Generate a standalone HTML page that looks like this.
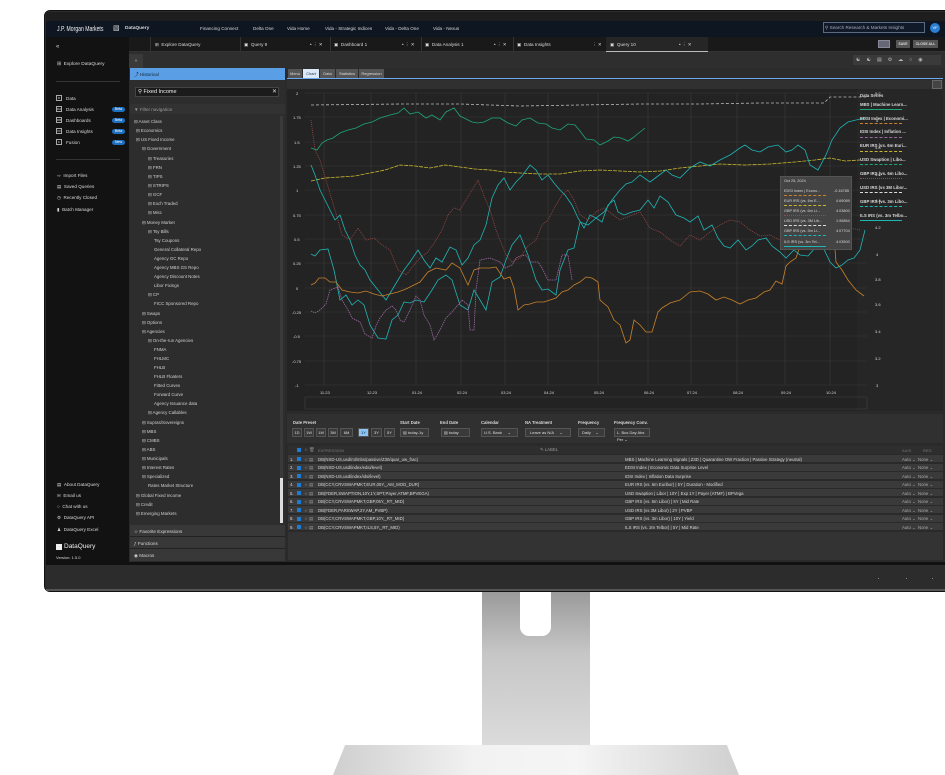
<!DOCTYPE html>
<html><head><meta charset="utf-8">
<style>
*{margin:0;padding:0;box-sizing:border-box}
body{width:945px;height:768px;background:#fff;position:relative;overflow:hidden;font-family:"Liberation Sans",sans-serif;color:#ddd}
.a{position:absolute}
.t{position:absolute;white-space:nowrap;font-size:4.6px;color:#d8d8d8}
.b{font-weight:bold}
.badge{position:absolute;left:112px;width:13px;height:5px;border-radius:3px;background:#1f6fbf;color:#fff;font-size:3.5px;text-align:center;line-height:5px}
.ic{position:absolute;width:6px;height:6px;border:1px solid #aaa;font-size:3px;color:#ddd;text-align:center;line-height:5px}
.tree .t{color:#cfcfcf;font-size:4.4px}
.row{position:absolute;left:288px;width:655px;height:8px;background:#3a3a3a;border-bottom:1px solid #2a2a2a}
.row .t{top:1.5px;font-size:4.3px}
.chk{position:absolute;width:4px;height:4px;background:#1f7ad4;top:2px}
.pill{position:absolute;height:9px;background:#3a3a3a;border:1px solid #555;font-size:4px;color:#ddd;text-align:center;line-height:7px}
</style></head><body>

<!-- stand -->
<div class="a" style="left:482px;top:590px;width:108px;height:158px;background:linear-gradient(#999,#c6c6c6 40%,#dcdcdc)"></div>
<div class="a" style="left:520px;top:590px;width:31px;height:46px;background:#fff;border-radius:0 0 9px 9px"></div>
<div class="a" style="left:333px;top:745px;width:406px;height:30px;background:linear-gradient(90deg,#cfcfcf,#f2f2f2 35%,#f5f5f5 60%,#d0d0d0);clip-path:polygon(3% 0,97% 0,100% 100%,0 100%)"></div>

<!-- bezel -->
<div class="a" style="left:44px;top:10px;width:910px;height:582px;background:#2c2c2c;border-radius:6px;border:1px solid #111"></div>
<div class="a" style="left:46px;top:12px;width:899px;height:553px;background:#1e1e1e"></div>
<div class="a" style="left:46px;top:562px;width:899px;height:3px;background:#111"></div>
<div class="a" style="left:46px;top:589px;width:899px;height:2px;background:#555"></div>
<div class="a" style="left:878px;top:578px;width:1px;height:1px;background:#888"></div>
<div class="a" style="left:906px;top:578px;width:1px;height:1px;background:#888"></div>
<div class="a" style="left:932px;top:578px;width:1px;height:1px;background:#888"></div>

<!-- top nav -->
<div class="a" style="left:46px;top:21px;width:899px;height:16px;background:#0e1622"></div>
<div class="t" style="left:57px;top:24px;font-size:7.5px;color:#eee;transform:scaleX(0.68);transform-origin:left">J.P. Morgan Markets</div>
<div class="t" style="left:113px;top:24px;font-size:7px;color:#ddd">&#9639;</div>
<div class="t b" style="left:125px;top:26px;font-size:4.8px">DataQuery</div>
<div class="t" style="left:200px;top:26px">Financing Connect</div>
<div class="t" style="left:253px;top:26px">Delta One</div>
<div class="t" style="left:287px;top:26px">Vida Home</div>
<div class="t" style="left:325px;top:26px">Vida - Strategic Indices</div>
<div class="t" style="left:385px;top:26px">Vida - Delta One</div>
<div class="t" style="left:433px;top:26px">Vida - Nexus</div>
<div class="a" style="left:823px;top:22px;width:102px;height:11px;border:1px solid #5a6a80;background:#101a28"></div>
<div class="t" style="left:825px;top:25px;color:#aab">&#9906; Search Research &amp; Markets Insights</div>
<div class="a" style="left:930px;top:23px;width:10px;height:10px;border-radius:50%;background:#2a7fd4;font-size:4px;text-align:center;line-height:10px;color:#fff">VF</div>

<!-- left sidebar -->
<div class="a" style="left:46px;top:37px;width:83px;height:525px;background:#121212"></div>
<div class="t" style="left:56px;top:44px;font-size:6px">&laquo;</div>
<div class="t" style="left:57px;top:62px;font-size:4.8px">&#8862; &nbsp;Explore DataQuery</div>
<div class="a" style="left:56px;top:81px;width:64px;height:1px;background:#333"></div>
<div class="ic" style="left:56px;top:95px">D</div><div class="t" style="left:66px;top:96px">Data</div>
<div class="ic" style="left:56px;top:106px">DA</div><div class="t" style="left:66px;top:107px">Data Analysis</div><div class="badge" style="top:107px">Beta</div>
<div class="ic" style="left:56px;top:117px">DB</div><div class="t" style="left:66px;top:118px">Dashboards</div><div class="badge" style="top:118px">Beta</div>
<div class="ic" style="left:56px;top:128px">DI</div><div class="t" style="left:66px;top:129px">Data Insights</div><div class="badge" style="top:129px">Beta</div>
<div class="ic" style="left:56px;top:139px">F</div><div class="t" style="left:66px;top:140px">Fusion</div><div class="badge" style="top:140px">New</div>
<div class="a" style="left:56px;top:159px;width:64px;height:1px;background:#333"></div>
<div class="t" style="left:57px;top:173px">&#8680; &nbsp;Import Files</div>
<div class="t" style="left:57px;top:184px">&#9636; &nbsp;Saved Queries</div>
<div class="t" style="left:57px;top:195px">&#9719; &nbsp;Recently Closed</div>
<div class="t" style="left:57px;top:207px">&#9646; &nbsp;Batch Manager</div>
<div class="t" style="left:57px;top:482px">&#9636; &nbsp;About DataQuery</div>
<div class="t" style="left:57px;top:493px">&#9993; &nbsp;Email us</div>
<div class="t" style="left:57px;top:504px">&#9675; &nbsp;Chat with us</div>
<div class="t" style="left:57px;top:515px">&#9881; &nbsp;DataQuery API</div>
<div class="t" style="left:57px;top:527px">&#9823; &nbsp;DataQuery Excel</div>
<div class="a" style="left:56px;top:544px;width:6px;height:6px;background:#eee"></div>
<div class="t" style="left:64px;top:543px;font-size:6.5px;color:#eee">DataQuery</div>
<div class="t" style="left:56px;top:555px;font-size:4px">Version: 1.5.0</div>

<!-- tab row -->
<div class="a" style="left:129px;top:37px;width:816px;height:15px;background:#191919;border-bottom:1px solid #333"></div>
<div class="a" style="left:150px;top:37px;width:1px;height:15px;background:#333"></div>
<div class="t" style="left:155px;top:42px">&#8862; &nbsp;Explore DataQuery</div>
<div class="a" style="left:240px;top:37px;width:1px;height:15px;background:#333"></div>
<div class="t" style="left:244px;top:42px">&#9635; &nbsp;Query 9</div><div class="t" style="left:310px;top:42px">&bull; &#8942; &#10005;</div>
<div class="a" style="left:330px;top:37px;width:1px;height:15px;background:#333"></div>
<div class="t" style="left:334px;top:42px">&#9635; &nbsp;Dashboard 1</div><div class="t" style="left:402px;top:42px">&bull; &#8942; &#10005;</div>
<div class="a" style="left:421px;top:37px;width:1px;height:15px;background:#333"></div>
<div class="t" style="left:425px;top:42px">&#9635; &nbsp;Data Analysis 1</div><div class="t" style="left:494px;top:42px">&bull; &#8942; &#10005;</div>
<div class="a" style="left:513px;top:37px;width:1px;height:15px;background:#333"></div>
<div class="t" style="left:517px;top:42px">&#9635; &nbsp;Data Insights</div><div class="t" style="left:592px;top:42px">&#8942; &#10005;</div>
<div class="a" style="left:606px;top:37px;width:1px;height:15px;background:#333"></div>
<div class="a" style="left:606px;top:37px;width:102px;height:15px;background:#262626;border-bottom:1px solid #bbb"></div>
<div class="t" style="left:610px;top:42px">&#9635; &nbsp;Query 10</div><div class="t" style="left:679px;top:42px">&bull; &#8942; &#10005;</div>
<div class="a" style="left:878px;top:40px;width:12px;height:8px;background:#667;border:1px solid #889"></div>
<div class="a" style="left:896px;top:40px;width:14px;height:8px;background:#555;font-size:3.5px;text-align:center;line-height:8px;font-weight:bold">SAVE</div>
<div class="a" style="left:913px;top:40px;width:25px;height:8px;background:#555;font-size:3.5px;text-align:center;line-height:8px;font-weight:bold">CLOSE ALL</div>

<!-- workspace -->
<div class="a" style="left:129px;top:52px;width:816px;height:510px;background:#2a2a2a"></div>
<div class="a" style="left:129px;top:52px;width:816px;height:16px;background:#2e2e2e"></div>
<div class="a" style="left:129px;top:54px;width:14px;height:14px;background:#3a3a3a;font-size:5px;text-align:center;line-height:14px;color:#aaa">&laquo;</div>
<div class="a" style="left:853px;top:55px;width:88px;height:10px;background:#3a3a3a"></div>
<div class="t" style="left:856px;top:57px;font-size:5px;color:#bbb;letter-spacing:6px">&#9775;&#9775;&#9636;&#9881;&#9729;&#9675;&#9673;</div>

<!-- left panel -->
<div class="a" style="left:130px;top:68px;width:155px;height:12px;background:#5a9fe6"></div>
<div class="t" style="left:134px;top:72px;color:#123">&#10548; Historical</div>
<div class="a" style="left:130px;top:80px;width:155px;height:481px;background:#2d2d2d"></div>
<div class="a" style="left:135px;top:87px;width:144px;height:10px;background:#1b1b1b;border:1px solid #444"></div>
<div class="t" style="left:138px;top:89px;font-size:5.5px;color:#eee">&#9906; Fixed Income</div>
<div class="t" style="left:272px;top:88px;font-size:6px">&#10005;</div>
<div class="a" style="left:130px;top:104px;width:155px;height:10px;background:#323232"></div>
<div class="t" style="left:134px;top:107px;color:#999">&#9660; Filter navigation</div>
<div class="a" style="left:280px;top:116px;width:3px;height:407px;background:#3a3a3a"></div>
<div class="a" style="left:280px;top:478px;width:3px;height:45px;background:#ddd"></div>
<div class="tree">
<div class="t" style="left:134px;top:119px">&#8863; Asset Class</div>
<div class="t" style="left:136px;top:128px">&#8863; Economics</div>
<div class="t" style="left:136px;top:137px">&#8863; US Fixed Income</div>
<div class="t" style="left:142px;top:146px">&#8863; Government</div>
<div class="t" style="left:148px;top:156px">&#8863; Treasuries</div>
<div class="t" style="left:148px;top:165px">&#8863; FRN</div>
<div class="t" style="left:148px;top:174px">&#8863; TIPS</div>
<div class="t" style="left:148px;top:183px">&#8863; STRIPS</div>
<div class="t" style="left:148px;top:192px">&#8863; GCF</div>
<div class="t" style="left:148px;top:201px">&#8863; Exch Traded</div>
<div class="t" style="left:148px;top:210px">&#8863; Misc</div>
<div class="t" style="left:142px;top:220px">&#8863; Money Market</div>
<div class="t" style="left:148px;top:229px">&#8863; Tsy Bills</div>
<div class="t" style="left:154px;top:238px">Tsy Coupons</div>
<div class="t" style="left:154px;top:247px">General Collateral Repo</div>
<div class="t" style="left:154px;top:256px">Agency GC Repo</div>
<div class="t" style="left:154px;top:265px">Agency MBS GS Repo</div>
<div class="t" style="left:154px;top:274px">Agency Discount Notes</div>
<div class="t" style="left:154px;top:283px">Libor Fixings</div>
<div class="t" style="left:148px;top:292px">&#8863; CP</div>
<div class="t" style="left:154px;top:301px">FICC Sponsored Repo</div>
<div class="t" style="left:142px;top:311px">&#8863; Swaps</div>
<div class="t" style="left:142px;top:320px">&#8863; Options</div>
<div class="t" style="left:142px;top:329px">&#8863; Agencies</div>
<div class="t" style="left:148px;top:338px">&#8863; On-the-run Agencies</div>
<div class="t" style="left:154px;top:347px">FNMA</div>
<div class="t" style="left:154px;top:356px">FHLMC</div>
<div class="t" style="left:154px;top:365px">FHLB</div>
<div class="t" style="left:154px;top:374px">FHLB Floaters</div>
<div class="t" style="left:154px;top:383px">Fitted Curves</div>
<div class="t" style="left:154px;top:392px">Forward Curve</div>
<div class="t" style="left:154px;top:401px">Agency Issuance data</div>
<div class="t" style="left:148px;top:410px">&#8863; Agency Callables</div>
<div class="t" style="left:142px;top:420px">&#8863; Supras/Sovereigns</div>
<div class="t" style="left:142px;top:429px">&#8863; MBS</div>
<div class="t" style="left:142px;top:438px">&#8863; CMBS</div>
<div class="t" style="left:142px;top:447px">&#8863; ABS</div>
<div class="t" style="left:142px;top:456px">&#8863; Municipals</div>
<div class="t" style="left:142px;top:465px">&#8863; Interest Rates</div>
<div class="t" style="left:142px;top:474px">&#8863; Specialized</div>
<div class="t" style="left:148px;top:483px">Rates Market Structure</div>
<div class="t" style="left:136px;top:493px">&#8863; Global Fixed Income</div>
<div class="t" style="left:136px;top:502px">&#8863; Credit</div>
<div class="t" style="left:136px;top:511px">&#8863; Emerging Markets</div>
</div>
<div class="a" style="left:130px;top:525px;width:155px;height:12px;background:#383838;border-bottom:1px solid #222"></div>
<div class="t" style="left:134px;top:529px">&#9734; Favorite Expressions</div>
<div class="a" style="left:130px;top:537px;width:155px;height:12px;background:#383838;border-bottom:1px solid #222"></div>
<div class="t" style="left:134px;top:541px">&#402; Functions</div>
<div class="a" style="left:130px;top:549px;width:155px;height:12px;background:#383838"></div>
<div class="t" style="left:134px;top:553px">&#9673; Macros</div>

<!-- chart panel -->
<div class="a" style="left:287px;top:68px;width:656px;height:11px;background:#2c2c2c;border-bottom:1px solid #6aaaf0"></div>
<div class="a" style="left:288px;top:69px;width:14px;height:9px;background:#555;font-size:4px;text-align:center;line-height:9px">Menu</div>
<div class="a" style="left:303px;top:69px;width:16px;height:9px;background:#dbe9f7;color:#235;font-size:4px;text-align:center;line-height:9px">Chart</div>
<div class="a" style="left:320px;top:69px;width:15px;height:9px;background:#555;font-size:4px;text-align:center;line-height:9px">Data</div>
<div class="a" style="left:336px;top:69px;width:22px;height:9px;background:#555;font-size:4px;text-align:center;line-height:9px">Statistics</div>
<div class="a" style="left:359px;top:69px;width:25px;height:9px;background:#555;font-size:4px;text-align:center;line-height:9px">Regression</div>
<div class="a" style="left:287px;top:80px;width:656px;height:9px;background:#303030"></div>
<div class="a" style="left:932px;top:80px;width:10px;height:9px;background:#444;border:1px solid #666"></div>
<div class="a" style="left:287px;top:89px;width:656px;height:322px;background:#232323"></div>
<div class="a" style="left:857px;top:89px;width:86px;height:322px;background:#262626"></div>

<svg class="a" style="left:0;top:0" width="945" height="768" viewBox="0 0 945 768">
<g stroke="#3a3a3a" stroke-width="0.6">
<line x1="305" y1="93" x2="867" y2="93"/><line x1="305" y1="117" x2="867" y2="117"/><line x1="305" y1="142" x2="867" y2="142"/><line x1="305" y1="166" x2="867" y2="166"/><line x1="305" y1="190" x2="867" y2="190"/><line x1="305" y1="215" x2="867" y2="215"/><line x1="305" y1="239" x2="867" y2="239"/><line x1="305" y1="263" x2="867" y2="263"/><line x1="305" y1="288" x2="867" y2="288"/><line x1="305" y1="312" x2="867" y2="312"/><line x1="305" y1="336" x2="867" y2="336"/><line x1="305" y1="361" x2="867" y2="361"/><line x1="305" y1="385" x2="867" y2="385"/>
<line x1="324" y1="93" x2="324" y2="385"/><line x1="371" y1="93" x2="371" y2="385"/><line x1="416" y1="93" x2="416" y2="385"/><line x1="461" y1="93" x2="461" y2="385"/><line x1="505" y1="93" x2="505" y2="385"/><line x1="548" y1="93" x2="548" y2="385"/><line x1="598" y1="93" x2="598" y2="385"/><line x1="648" y1="93" x2="648" y2="385"/><line x1="691" y1="93" x2="691" y2="385"/><line x1="737" y1="93" x2="737" y2="385"/><line x1="785" y1="93" x2="785" y2="385"/><line x1="830" y1="93" x2="830" y2="385"/>
</g>
<g fill="none" stroke-width="0.8">
<polyline stroke="#bbb" stroke-dasharray="3,2" points="311,105 400,104 460,104 520,106 580,105 640,104 700,104 760,103 824,103 830,97 866,97"/>
<polyline stroke="#1ea67a" points="311,148 317,150 322,143 327,140 333,138 340,133 348,130 356,128 364,124 372,122 380,118 390,115 398,113 404,108 410,114 418,112 426,118 432,115 440,120 446,112 454,108 460,116 466,119 472,122 478,123 484,122 492,118 500,118 508,123 516,126 522,120 530,118 538,123 546,124 552,128 560,130 568,124 575,125 580,131 586,139 594,140 600,145 608,141 614,137 621,138 628,141 634,137 640,132 645,128"/>
<polyline stroke="#c8b72c" stroke-dasharray="4,1" points="311,181 325,178 340,177 355,176 370,173 385,170 400,165 415,166 430,168 445,165 460,167 475,169 490,170 505,172 520,173 540,174 560,174 580,171 600,170 620,171 640,172 660,171 680,168 700,166 720,164 745,165 770,164 795,162 815,160 830,158 845,161 860,160"/>
<polyline stroke="#1fb5b5" points="311,165 315,175 320,190 325,200 330,210 335,220 340,215 345,230 350,240 355,255 360,265 365,270 370,280 378,290 386,300 392,290 398,280 404,270 410,262 418,250 424,260 430,268 436,258 442,262 450,247 456,250 462,265 468,258 474,245 480,240 486,225 492,198 498,185 504,178 510,190 516,182 522,176 530,165 536,170 542,180 548,175 554,183 560,190 565,195 572,205 578,218 584,228 590,215 596,218 602,222 608,205 614,200 618,212 624,215 632,212 640,210 648,200 654,208 660,196 668,202 676,215 684,218 690,222 698,216 704,230 712,225 718,238 724,246 730,248 738,240 746,250 752,246 758,240 766,238 772,246 780,252 786,258 794,250 800,255 808,256 815,248 822,245 830,262 836,268 842,265 848,260 854,258 860,250 865,230"/>
<polyline stroke="#1fb5b5" points="311,254 315,256 320,250 328,249 334,270 340,300 346,295 352,305 358,300 364,305 370,325 378,338 386,339 392,320 398,315 404,302 410,303 416,300 424,302 432,290 438,280 446,275 452,280 460,305 468,310 474,290 480,300 486,310 492,282 500,277 506,260 512,245 520,235 528,255 536,280 542,290 548,289 556,295 560,270 568,250 574,248 580,222 588,225 596,218 604,212 612,200 620,190 626,184 632,182 640,175 650,182 658,176 666,170 672,175 680,178 690,168 700,162 710,166 720,160 730,155 740,148 745,145 752,150 760,152 768,147 778,145 786,152 792,150 798,145 805,150 810,165 818,170 826,155 832,140 840,128 848,122 856,120 865,118"/>
<polyline stroke="#c9822a" points="311,285 315,283 319,278 325,278 330,282 336,282 342,290 350,292 358,293 366,291 374,294 382,296 390,294 398,292 406,289 414,285 420,282 428,272 436,268 446,270 452,263 460,268 468,285 474,270 480,268 490,268 496,267 504,279 510,277 514,288 518,310 524,305 530,304 536,302 544,302 550,300 556,298 562,292 568,290 574,285 580,282 586,277 592,278 598,282 600,300 608,307 614,320 620,325 626,343 630,340 634,320 640,325 646,332 652,332 658,312 662,308 670,303 680,300 690,292 700,291 708,294 716,300 724,297 732,300 740,304 748,300 756,298 764,292 770,290 776,281 782,284 786,266 790,262 796,258 800,246 806,234 814,236 820,232 828,236 834,238 836,262 842,270 848,280 856,290 864,296"/>
<polyline stroke="#9c68a0" stroke-dasharray="1.5,0.8" points="311,311 315,313 320,310 326,304 330,290 338,287 342,300 348,310 352,318 360,322 365,334 372,338 376,326 380,318 386,310 392,306 396,310 400,320 404,322 410,310 416,296 420,300 424,315 430,325 434,340 440,330 446,318 452,312 458,305 462,300 468,305 470,330 474,330 476,290 480,260 490,258 500,262 505,268 512,265 516,258 520,256 526,255 530,262 538,262 542,268 548,280 556,280 562,255 568,255 572,280"/>
<polyline stroke="#a04848" stroke-dasharray="1,1" points="311,120 315,150 320,160 326,180 332,200 338,220 342,235 350,240 358,228 366,240 374,238 382,245 390,250 398,270 406,275 414,265 420,258 428,252 436,240 442,230 448,215 454,208 460,210 466,200 472,190 478,180 484,196 490,210 496,230 500,240 506,255 512,262 520,258 528,246 536,240 542,225 548,220 556,205 562,195 568,190 574,200 580,215 588,220 596,212 604,208 612,214 620,220 630,216 640,212 650,228 660,232 670,240 680,246 690,235 700,240 710,232 720,225 730,220 740,222 750,230 760,236 770,235 780,240 790,238 800,234 812,230 820,235 830,224 840,226 850,228 860,230"/>
</g>
<rect x="305" y="397" width="562" height="12" fill="none" stroke="#3a3a3a" stroke-width="0.8" rx="1"/>
</svg>

<!-- axes labels -->
<div class="t" style="left:296px;top:91px;font-size:4px">2</div>
<div class="t" style="left:293px;top:115px;font-size:4px">1.75</div>
<div class="t" style="left:294px;top:140px;font-size:4px">1.5</div>
<div class="t" style="left:293px;top:164px;font-size:4px">1.25</div>
<div class="t" style="left:296px;top:188px;font-size:4px">1</div>
<div class="t" style="left:293px;top:213px;font-size:4px">0.75</div>
<div class="t" style="left:294px;top:237px;font-size:4px">0.5</div>
<div class="t" style="left:293px;top:261px;font-size:4px">0.25</div>
<div class="t" style="left:296px;top:286px;font-size:4px">0</div>
<div class="t" style="left:292px;top:310px;font-size:4px">-0.25</div>
<div class="t" style="left:293px;top:334px;font-size:4px">-0.5</div>
<div class="t" style="left:292px;top:359px;font-size:4px">-0.75</div>
<div class="t" style="left:295px;top:383px;font-size:4px">-1</div>
<div class="t" style="left:875px;top:91px;font-size:4px">5.2</div>
<div class="t" style="left:876px;top:118px;font-size:4px">5</div>
<div class="t" style="left:875px;top:145px;font-size:4px">4.8</div>
<div class="t" style="left:875px;top:172px;font-size:4px">4.6</div>
<div class="t" style="left:875px;top:198px;font-size:4px">4.4</div>
<div class="t" style="left:875px;top:225px;font-size:4px">4.2</div>
<div class="t" style="left:876px;top:252px;font-size:4px">4</div>
<div class="t" style="left:875px;top:277px;font-size:4px">3.8</div>
<div class="t" style="left:875px;top:302px;font-size:4px">3.6</div>
<div class="t" style="left:875px;top:329px;font-size:4px">3.4</div>
<div class="t" style="left:875px;top:356px;font-size:4px">3.2</div>
<div class="t" style="left:876px;top:383px;font-size:4px">3</div>
<div class="t" style="left:320px;top:390px;font-size:4px">11.23</div>
<div class="t" style="left:367px;top:390px;font-size:4px">12.23</div>
<div class="t" style="left:412px;top:390px;font-size:4px">01.24</div>
<div class="t" style="left:457px;top:390px;font-size:4px">02.24</div>
<div class="t" style="left:501px;top:390px;font-size:4px">03.24</div>
<div class="t" style="left:544px;top:390px;font-size:4px">04.24</div>
<div class="t" style="left:594px;top:390px;font-size:4px">05.24</div>
<div class="t" style="left:644px;top:390px;font-size:4px">06.24</div>
<div class="t" style="left:687px;top:390px;font-size:4px">07.24</div>
<div class="t" style="left:733px;top:390px;font-size:4px">08.24</div>
<div class="t" style="left:781px;top:390px;font-size:4px">09.24</div>
<div class="t" style="left:826px;top:390px;font-size:4px">10.24</div>

<!-- legend -->
<div class="t b" style="left:860px;top:93px;font-size:4.3px">Data Series</div>
<div class="t b" style="left:860px;top:102px;font-size:4.3px">MBS | Machine Learn...</div><div class="a" style="left:860px;top:109px;width:42px;height:1px;background:#1ea67a"></div>
<div class="t b" style="left:860px;top:116px;font-size:4.3px">EDSI Index | Economi...</div><div class="a" style="left:860px;top:123px;width:42px;height:1px;border-top:1px dashed #c9822a"></div>
<div class="t b" style="left:860px;top:129px;font-size:4.3px">IDSI Index | Inflation ...</div><div class="a" style="left:860px;top:137px;width:42px;height:1px;border-top:1px dashed #9c68a0"></div>
<div class="t b" style="left:860px;top:143px;font-size:4.3px">EUR IRS (vs. 6m Euri...</div><div class="a" style="left:860px;top:151px;width:42px;height:1px;border-top:1px dashed #c8b72c"></div>
<div class="t b" style="left:860px;top:157px;font-size:4.3px">USD Swaption | Libo...</div><div class="a" style="left:860px;top:164px;width:42px;height:1px;border-top:1px dashed #1ea67a"></div>
<div class="t b" style="left:860px;top:171px;font-size:4.3px">GBP IRS (vs. 6m Libo...</div><div class="a" style="left:860px;top:178px;width:42px;height:1px;border-top:1px dotted #a04848"></div>
<div class="t b" style="left:860px;top:185px;font-size:4.3px">USD IRS (vs 3M Libor...</div><div class="a" style="left:860px;top:192px;width:42px;height:1px;border-top:1px dashed #ddd"></div>
<div class="t b" style="left:860px;top:199px;font-size:4.3px">GBP IRS (vs. 3m Libo...</div><div class="a" style="left:860px;top:206px;width:42px;height:1px;border-top:1px dashed #1fb5b5"></div>
<div class="t b" style="left:860px;top:213px;font-size:4.3px">ILS IRS (vs. 3m Telbo...</div><div class="a" style="left:860px;top:220px;width:42px;height:1px;background:#1fb5b5"></div>

<!-- tooltip -->
<div class="a" style="left:780px;top:176px;width:72px;height:74px;background:#444;border:1px solid #555"></div>
<div class="t" style="left:784px;top:179px;font-size:3.8px">Oct 25, 2024</div>
<div class="t" style="left:784px;top:189px;font-size:3.8px">EDSI Index | Econo...</div><div class="t" style="left:834px;top:189px;font-size:3.8px">-0.16785</div><div class="a" style="left:784px;top:195px;width:42px;border-top:1px dashed #c9822a"></div>
<div class="t" style="left:784px;top:199px;font-size:3.8px">EUR IRS (vs. 6m E...</div><div class="t" style="left:836px;top:199px;font-size:3.8px">4.69089</div><div class="a" style="left:784px;top:205px;width:42px;border-top:1px dashed #c8b72c"></div>
<div class="t" style="left:784px;top:209px;font-size:3.8px">GBP IRS (vs. 6m Li...</div><div class="t" style="left:836px;top:209px;font-size:3.8px">4.03800</div><div class="a" style="left:784px;top:215px;width:42px;border-top:1px dotted #a04848"></div>
<div class="t" style="left:784px;top:219px;font-size:3.8px">USD IRS (vs. 3M Lib...</div><div class="t" style="left:836px;top:219px;font-size:3.8px">1.95864</div><div class="a" style="left:784px;top:225px;width:42px;border-top:1px dashed #ddd"></div>
<div class="t" style="left:784px;top:229px;font-size:3.8px">GBP IRS (vs. 3m Li...</div><div class="t" style="left:836px;top:229px;font-size:3.8px">4.07704</div><div class="a" style="left:784px;top:235px;width:42px;border-top:1px dashed #1fb5b5"></div>
<div class="t" style="left:784px;top:240px;font-size:3.8px">ILS IRS (vs. 3m Tel...</div><div class="t" style="left:836px;top:240px;font-size:3.8px">4.03500</div><div class="a" style="left:784px;top:246px;width:42px;border-top:1px solid #1fb5b5"></div>

<!-- controls -->
<div class="a" style="left:287px;top:414px;width:656px;height:29px;background:#303030"></div>
<div class="t b" style="left:293px;top:420px;font-size:4.2px">Date Preset</div>
<div class="t b" style="left:400px;top:420px;font-size:4.2px">Start Date</div>
<div class="t b" style="left:440px;top:420px;font-size:4.2px">End Date</div>
<div class="t b" style="left:481px;top:420px;font-size:4.2px">Calendar</div>
<div class="t b" style="left:525px;top:420px;font-size:4.2px">NA Treatment</div>
<div class="t b" style="left:578px;top:420px;font-size:4.2px">Frequency</div>
<div class="t b" style="left:614px;top:420px;font-size:4.2px">Frequency Conv.</div>
<div class="pill" style="left:292px;top:428px;width:10px">1D</div>
<div class="pill" style="left:304px;top:428px;width:10px">1W</div>
<div class="pill" style="left:316px;top:428px;width:10px">1M</div>
<div class="pill" style="left:328px;top:428px;width:10px">3M</div>
<div class="pill" style="left:340px;top:428px;width:13px">6M</div>
<div class="pill" style="left:358px;top:428px;width:11px;background:#8cc4f5;color:#123">1Y</div>
<div class="pill" style="left:371px;top:428px;width:11px">3Y</div>
<div class="pill" style="left:384px;top:428px;width:11px">5Y</div>
<div class="pill" style="left:400px;top:428px;width:29px;text-align:left;padding-left:2px">&#9636; today-1y</div>
<div class="pill" style="left:441px;top:428px;width:29px;text-align:left;padding-left:2px">&#9636; today</div>
<div class="pill" style="left:481px;top:428px;width:37px;text-align:left;padding-left:2px">U.S. Bank &nbsp; &nbsp; &#8964;</div>
<div class="pill" style="left:525px;top:428px;width:46px;text-align:left;padding-left:4px">Leave as N/A &nbsp; &nbsp; &#8964;</div>
<div class="pill" style="left:578px;top:428px;width:27px;text-align:left;padding-left:3px">Daily &nbsp; &nbsp;&#8964;</div>
<div class="pill" style="left:614px;top:428px;width:36px;text-align:left;padding-left:2px">L. Bus Day Abs Per &#8964;</div>

<!-- table -->
<div class="a" style="left:288px;top:446px;width:655px;height:8px;background:#2e2e2e"></div>
<div class="chk" style="left:297px;top:448px"></div>
<div class="t" style="left:304px;top:447px;font-size:4.3px;color:#888">&#9734; &#128465;</div>
<div class="t" style="left:318px;top:448px;font-size:4px;color:#777">EXPRESSION</div>
<div class="t" style="left:540px;top:447px;font-size:4.3px;color:#999">&#9998; LABEL</div>
<div class="t" style="left:902px;top:448px;font-size:4px;color:#777">AXIS</div>
<div class="t" style="left:923px;top:448px;font-size:4px;color:#777">REG</div>

<div class="row" style="top:455px"><div class="t" style="left:2px">1.</div><div class="chk" style="left:9px"></div><div class="t" style="left:16px;color:#999">&#9734; &#9636;</div><div class="t" style="left:30px">DB(NXD-US,usd/ml/mbs/passive/Z30/quar_ow_frac)</div><div class="t" style="left:337px">MBS | Machine Learning Signals | Z3D | Quarantine OW Fraction | Passive Strategy (neutral)</div><div class="t" style="left:614px;color:#aaa">Auto &#8964; &nbsp;None &#8964;</div></div>
<div class="row" style="top:463.5px"><div class="t" style="left:2px">2.</div><div class="chk" style="left:9px"></div><div class="t" style="left:16px;color:#999">&#9734; &#9636;</div><div class="t" style="left:30px">DB(NXD-US,usd/index/edsi/level)</div><div class="t" style="left:337px">EDSI Index | Economic Data Surprise Level</div><div class="t" style="left:614px;color:#aaa">Auto &#8964; &nbsp;None &#8964;</div></div>
<div class="row" style="top:472px"><div class="t" style="left:2px">3.</div><div class="chk" style="left:9px"></div><div class="t" style="left:16px;color:#999">&#9734; &#9636;</div><div class="t" style="left:30px">DB(NXD-US,usd/index/idsi/level)</div><div class="t" style="left:337px">IDSI Index | Inflation Data Surprise</div><div class="t" style="left:614px;color:#aaa">Auto &#8964; &nbsp;None &#8964;</div></div>
<div class="row" style="top:480.5px"><div class="t" style="left:2px">4.</div><div class="chk" style="left:9px"></div><div class="t" style="left:16px;color:#999">&#9734; &#9636;</div><div class="t" style="left:30px">DB(CCY,CRVSWAPMKT,EUR,05Y,_AM_MOD_DUR)</div><div class="t" style="left:337px">EUR IRS (vs. 6m Euribor) | 5Y | Duration - Modified</div><div class="t" style="left:614px;color:#aaa">Auto &#8964; &nbsp;None &#8964;</div></div>
<div class="row" style="top:489px"><div class="t" style="left:2px">5.</div><div class="chk" style="left:9px"></div><div class="t" style="left:16px;color:#999">&#9734; &#9636;</div><div class="t" style="left:30px">DB(FDER,SWAPTION,10Y,1Y,SPT,Payer,ATMF,BPVEGA)</div><div class="t" style="left:337px">USD Swaption | Libor | 10Y | Exp 1Y | Payer (ATMF) | BPVega</div><div class="t" style="left:614px;color:#aaa">Auto &#8964; &nbsp;None &#8964;</div></div>
<div class="row" style="top:497.5px"><div class="t" style="left:2px">6.</div><div class="chk" style="left:9px"></div><div class="t" style="left:16px;color:#999">&#9734; &#9636;</div><div class="t" style="left:30px">DB(CCY,CRVSWAPMKT,GBP,05Y,_RT_MID)</div><div class="t" style="left:337px">GBP IRS (vs. 6m Libor) | 5Y | Mid Rate</div><div class="t" style="left:614px;color:#aaa">Auto &#8964; &nbsp;None &#8964;</div></div>
<div class="row" style="top:506px"><div class="t" style="left:2px">7.</div><div class="chk" style="left:9px"></div><div class="t" style="left:16px;color:#999">&#9734; &#9636;</div><div class="t" style="left:30px">DB(FDER,PARSWAP,2Y,AM_PVBP)</div><div class="t" style="left:337px">USD IRS (vs 3M Libor) | 2Y | PVBP</div><div class="t" style="left:614px;color:#aaa">Auto &#8964; &nbsp;None &#8964;</div></div>
<div class="row" style="top:514.5px"><div class="t" style="left:2px">8.</div><div class="chk" style="left:9px"></div><div class="t" style="left:16px;color:#999">&#9734; &#9636;</div><div class="t" style="left:30px">DB(CCY,CRVSWAPMKT,GBP,10Y,_RT_MID)</div><div class="t" style="left:337px">GBP IRS (vs. 3m Libor) | 10Y | Yield</div><div class="t" style="left:614px;color:#aaa">Auto &#8964; &nbsp;None &#8964;</div></div>
<div class="row" style="top:523px"><div class="t" style="left:2px">9.</div><div class="chk" style="left:9px"></div><div class="t" style="left:16px;color:#999">&#9734; &#9636;</div><div class="t" style="left:30px">DB(CCY,CRVSWAPMKT,ILS,5Y,_RT_MID)</div><div class="t" style="left:337px">ILS IRS (vs. 3m Telbor) | 5Y | Mid Rate</div><div class="t" style="left:614px;color:#aaa">Auto &#8964; &nbsp;None &#8964;</div></div>
<div class="a" style="left:288px;top:532px;width:655px;height:28px;background:#333"></div>
</body></html>
